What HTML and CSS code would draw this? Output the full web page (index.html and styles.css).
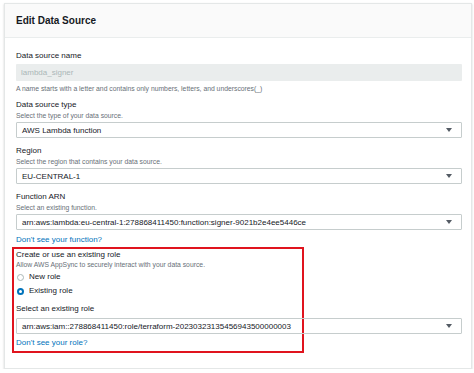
FILE: index.html
```html
<!DOCTYPE html>
<html lang="en">
<head>
    <meta charset="UTF-8">
    <title>Edit Data Source</title>
    <link rel="stylesheet" href="styles.css">
</head>
<body>
    <div class="panel">
        <div class="panel-header">
            <h2>Edit Data Source</h2>
        </div>
        <div class="panel-body">
            <div class="field first">
                <label>Data source name</label>
                <div class="input disabled">lambda_signer</div>
                <p class="hint after">A name starts with a letter and contains only numbers, letters, and underscores(_)</p>
            </div>

            <div class="field tight">
                <label>Data source type</label>
                <p class="hint">Select the type of your data source.</p>
                <div class="select">AWS Lambda function <span class="arrow"></span></div>
            </div>

            <div class="field">
                <label>Region</label>
                <p class="hint">Select the region that contains your data source.</p>
                <div class="select">EU-CENTRAL-1 <span class="arrow"></span></div>
            </div>

            <div class="field">
                <label>Function ARN</label>
                <p class="hint">Select an existing function.</p>
                <div class="select">arn:aws:lambda:eu-central-1:278868411450:function:signer-9021b2e4ee5446ce <span class="arrow"></span></div>
            </div>

            <a href="#" class="link">Don't see your function?</a>

            <div class="role-box">
                <label>Create or use an existing role</label>
                <p class="hint">Allow AWS AppSync to securely interact with your data source.</p>
                <div class="radio-row">
                    <span class="radio"></span> New role
                </div>
                <div class="radio-row">
                    <span class="radio checked"></span> Existing role
                </div>
                <label class="sub-label">Select an existing role</label>
                <div class="select wide">arn:aws:iam::278868411450:role/terraform-20230323135456943500000003 <span class="arrow"></span></div>
                <a href="#" class="link">Don't see your role?</a>
            </div>
        </div>
    </div>
</body>
</html>
```

FILE: styles.css
```css
* {
    margin: 0;
    padding: 0;
    box-sizing: border-box;
    font-family: "Liberation Sans", Arial, sans-serif;
}

body {
    background: #ffffff;
    color: #16191f;
    padding: 3px 0 0 4px;
}

.panel {
    width: 468px;
    background: white;
    border: 1px solid #e4e7e7;
    box-shadow: 0 1px 2px rgba(0, 0, 0, 0.18);
}

.panel-header {
    height: 34px;
    background: #fafafa;
    border-bottom: 1px solid #eaeded;
    display: flex;
    align-items: center;
    padding-left: 11px;
}

.panel-header h2 {
    font-size: 10px;
    font-weight: bold;
}

.panel-body {
    padding: 12px 9px 15px 11px;
}

label {
    display: block;
    font-size: 8px;
    line-height: 12px;
}

.hint {
    font-size: 6.8px;
    line-height: 10px;
    color: #687078;
}

.hint.after {
    margin-top: 3px;
}

.field {
    margin-top: 7px;
}

.field.first {
    margin-top: 0;
}

.field.first .input {
    margin-top: 2px;
}

.field.tight {
    margin-top: 5px;
}

.input,
.select {
    font-size: 8px;
    display: flex;
    align-items: center;
    padding: 0 5px;
    border-radius: 1px;
}

.input {
    height: 17px;
}

.input.disabled {
    background: #eaeded;
    color: #aab7b8;
}

.select {
    height: 16px;
    margin-top: 1px;
    border: 1px solid #c6cdcd;
    justify-content: space-between;
    white-space: nowrap;
}

.arrow {
    width: 0;
    height: 0;
    border-left: 3px solid transparent;
    border-right: 3px solid transparent;
    border-top: 4px solid #545b64;
    margin-right: 4px;
}

.link {
    display: block;
    margin-top: 4px;
    font-size: 8px;
    line-height: 12px;
    color: #0073bb;
    text-decoration: none;
}

.role-box {
    margin: 1px 0 0 -4px;
    width: 292px;
    border: 2px solid #e0141e;
    padding: 0 0 2px 2px;
}

.role-box .hint {
    line-height: 8px;
}

.radio-row {
    display: flex;
    align-items: center;
    gap: 5px;
    font-size: 8px;
    line-height: 12px;
    margin-top: 2px;
    padding-left: 1px;
}

.radio {
    width: 7px;
    height: 7px;
    border-radius: 50%;
    border: 1px solid #aab7b8;
}

.radio.checked {
    border: 2px solid #0073bb;
}

.sub-label {
    margin-top: 6px;
}

.role-box .select {
    width: 446px;
    margin-top: 3px;
}

.role-box .link {
    margin-top: 3px;
}
```
